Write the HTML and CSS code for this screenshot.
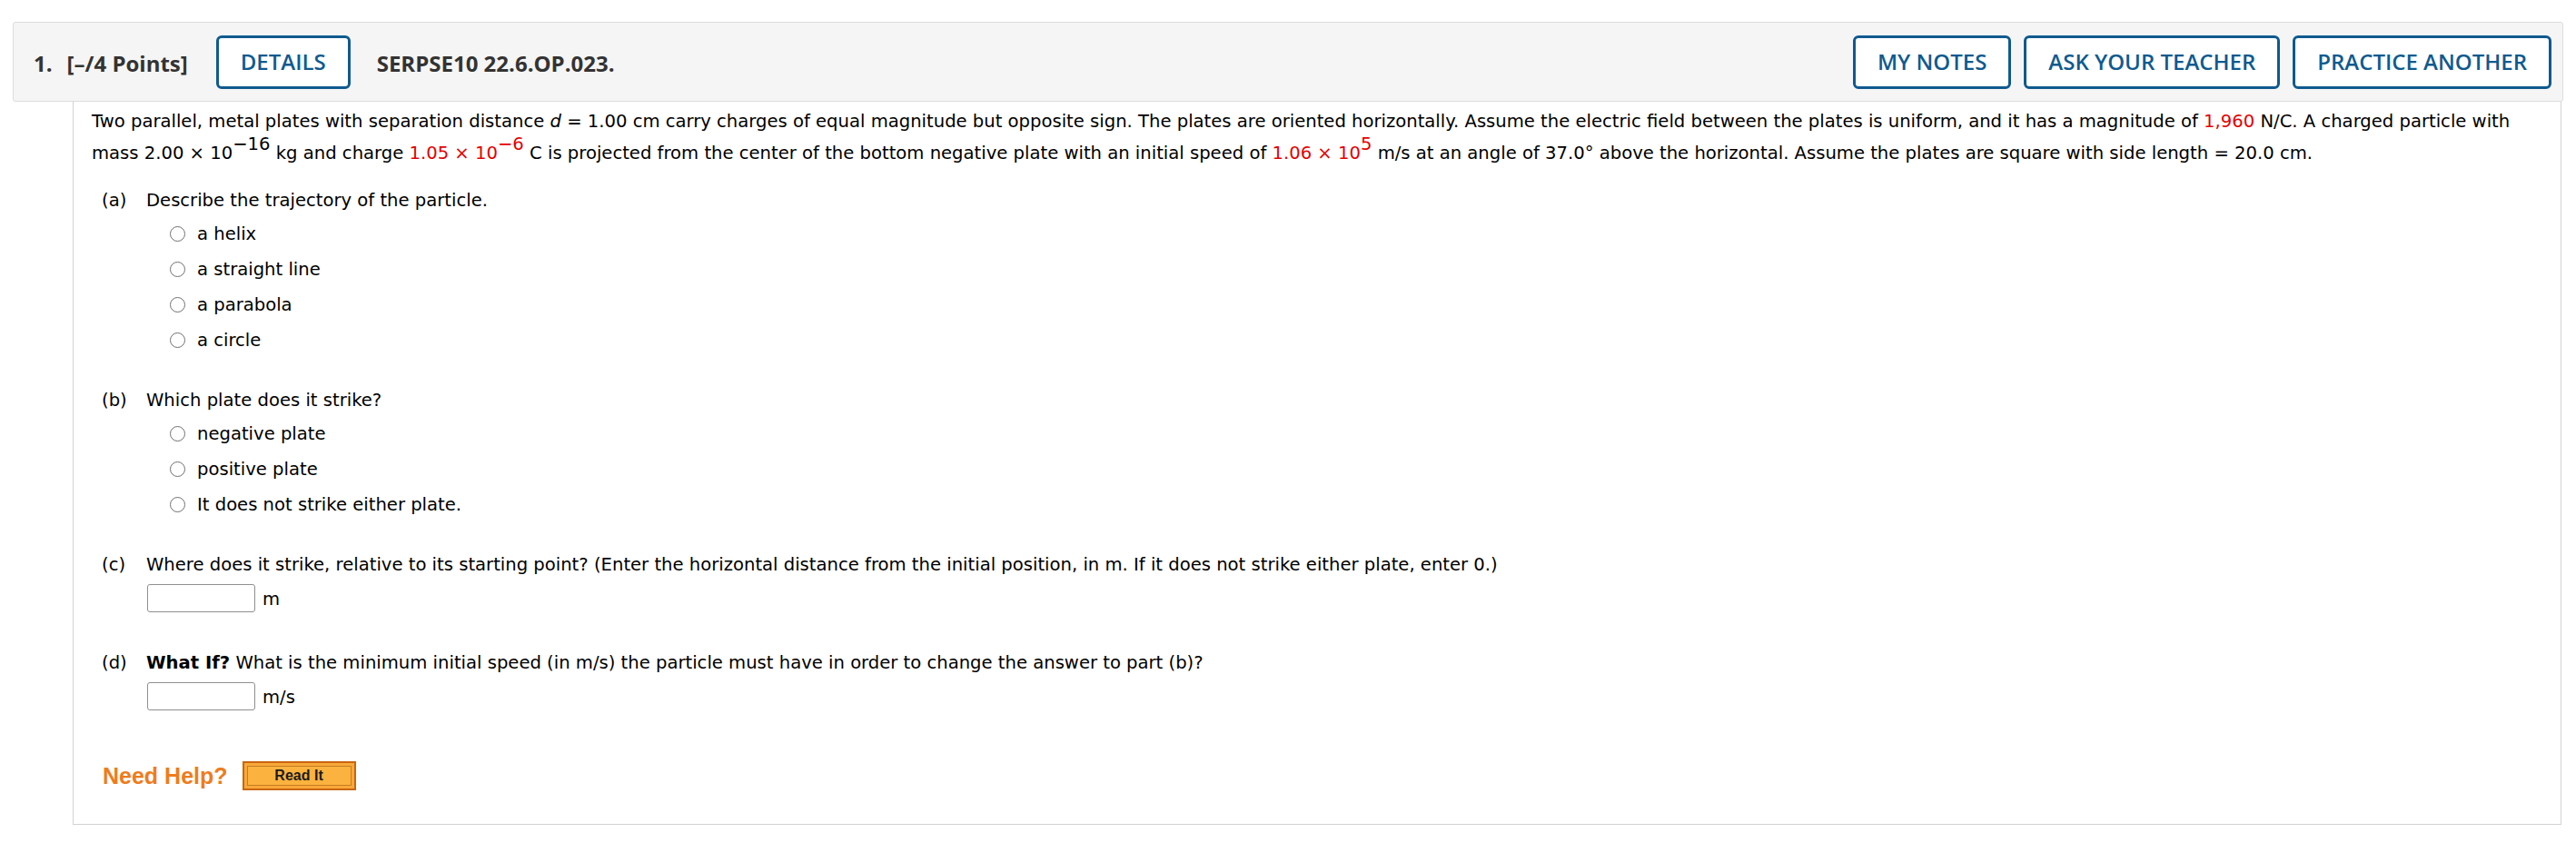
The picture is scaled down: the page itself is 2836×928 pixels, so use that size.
FILE: index.html
```html
<!DOCTYPE html>
<html lang="en">
<head>
<meta charset="utf-8">
<title>Question 1</title>
<link rel="stylesheet" href="styles.css">
</head>
<body>
<div class="page">
  <div class="qhead">
    <span class="qnum">1.</span>
    <span class="qpts">[–/4 Points]</span>
    <button class="btn btn-details" type="button">DETAILS</button>
    <span class="qcode">SERPSE10 22.6.OP.023.</span>
    <div class="actions">
      <button class="btn btn-notes" type="button">MY NOTES</button>
      <button class="btn" type="button">ASK YOUR TEACHER</button>
      <button class="btn" type="button">PRACTICE ANOTHER</button>
    </div>
  </div>
  <div class="qbody">
    <p class="stem">Two parallel, metal plates with separation distance <i>d</i> = 1.00 cm carry charges of equal magnitude but opposite sign. The plates are oriented horizontally. Assume the electric field between the plates is uniform, and it has a magnitude of <span class="red">1,960</span> N/C. A charged particle with mass 2.00 × 10<sup>−16</sup> kg and charge <span class="red">1.05 × 10<sup>−6</sup></span> C is projected from the center of the bottom negative plate with an initial speed of <span class="red">1.06 × 10<sup>5</sup></span> m/s at an angle of 37.0° above the horizontal. Assume the plates are square with side length = 20.0 cm.</p>

    <div class="part part-first">
      <div class="pq"><span class="plabel">(a)</span><span class="ptext">Describe the trajectory of the particle.</span></div>
      <ul class="opts">
        <li><span class="radio"></span>a helix</li>
        <li><span class="radio"></span>a straight line</li>
        <li><span class="radio"></span>a parabola</li>
        <li><span class="radio"></span>a circle</li>
      </ul>
    </div>

    <div class="part">
      <div class="pq"><span class="plabel">(b)</span><span class="ptext">Which plate does it strike?</span></div>
      <ul class="opts">
        <li><span class="radio"></span>negative plate</li>
        <li><span class="radio"></span>positive plate</li>
        <li><span class="radio"></span>It does not strike either plate.</li>
      </ul>
    </div>

    <div class="part">
      <div class="pq"><span class="plabel">(c)</span><span class="ptext">Where does it strike, relative to its starting point? (Enter the horizontal distance from the initial position, in m. If it does not strike either plate, enter 0.)</span></div>
      <div class="answer"><span class="field"></span><span class="unit">m</span></div>
    </div>

    <div class="part">
      <div class="pq"><span class="plabel">(d)</span><span class="ptext"><b>What If?</b> What is the minimum initial speed (in m/s) the particle must have in order to change the answer to part (b)?</span></div>
      <div class="answer"><span class="field"></span><span class="unit">m/s</span></div>
    </div>

    <div class="help">
      <span class="need">Need Help?</span>
      <span class="readit"><span class="readit-inner">Read It</span></span>
    </div>
  </div>
</div>
</body>
</html>
```

FILE: styles.css
```css
html, body {
  margin: 0;
  padding: 0;
  background: #ffffff;
}

.page {
  padding: 24px 14px 0 14px;
}

/* ---------- header bar ---------- */
.qhead {
  box-sizing: border-box;
  height: 88px;
  display: flex;
  align-items: center;
  background: #f5f5f5;
  border: 1px solid #dcdcdc;
  border-radius: 3px;
  padding: 0 12px 0 22px;
  font-family: "Open Sans", "Liberation Sans", sans-serif;
  color: #333333;
}

.qnum,
.qpts,
.qcode {
  font-size: 24px;
  font-weight: 700;
  padding-top: 3px;
}

.qnum {
  margin-right: 16px;
}

.qpts {
  margin-right: 31px;
}

.qcode {
  margin-left: 29px;
}

.btn {
  box-sizing: border-box;
  height: 59px;
  margin: 0;
  padding: 0 24px;
  border: 3px solid #0f5a8f;
  border-radius: 6px;
  background: #ffffff;
  color: #0f5a8f;
  font-family: "Open Sans", "Liberation Sans", sans-serif;
  font-size: 24px;
  font-weight: 600;
  line-height: 1;
}

.btn-notes {
  min-width: 172px;
}

.actions {
  margin-left: auto;
  display: flex;
  gap: 14px;
}

/* ---------- question body ---------- */
.qbody {
  margin: 0 2px 0 66px;
  border: 1px solid #d3d3d3;
  border-top: none;
  padding: 4px 20px 37px 20px;
  font-family: "DejaVu Sans", Verdana, sans-serif;
  font-size: 19.6px;
  color: #000000;
}

.stem {
  margin: 0;
  line-height: 35px;
}

.stem sup {
  font-size: 100%;
  line-height: 0;
  vertical-align: 0.5em;
}

.red {
  color: #e60000;
}

.part {
  margin-top: 29px;
  padding-left: 11px;
}

.part-first {
  margin-top: 17px;
}

.pq {
  display: flex;
  line-height: 35px;
}

.plabel {
  flex: 0 0 49px;
}

.opts {
  list-style: none;
  margin: 0;
  padding: 0 0 0 75px;
}

.opts li {
  display: flex;
  align-items: center;
  height: 39px;
  line-height: 39px;
}

.radio {
  box-sizing: border-box;
  width: 17px;
  height: 17px;
  margin-right: 13px;
  border: 1px solid #6f6f6f;
  border-radius: 50%;
  background: #ffffff;
  flex: 0 0 auto;
}

.answer {
  display: flex;
  align-items: center;
  margin: 4px 0 0 50px;
  padding-bottom: 9px;
}

.field {
  box-sizing: border-box;
  width: 119px;
  height: 31px;
  border: 1px solid #8f8f8f;
  border-radius: 3px;
  background: #ffffff;
}

.unit {
  margin-left: 8px;
  line-height: 1;
  padding-top: 3px;
}

/* ---------- need help ---------- */
.help {
  display: flex;
  align-items: center;
  margin-top: 47px;
  padding-left: 12px;
  font-family: "Liberation Sans", Arial, sans-serif;
}

.need {
  color: #ee7c1c;
  font-size: 25px;
  font-weight: 700;
  line-height: 1;
  margin-right: 16px;
}

.readit {
  box-sizing: border-box;
  display: flex;
  width: 125px;
  height: 32px;
  padding: 3px;
  border: 2px solid #c9660f;
  background: #f9a93a;
}

.readit-inner {
  flex: 1;
  display: flex;
  align-items: center;
  justify-content: center;
  border: 1px solid #c47d22;
  background: #fbb23f;
  color: #1a1a1a;
  font-size: 16px;
  font-weight: 700;
}
```
